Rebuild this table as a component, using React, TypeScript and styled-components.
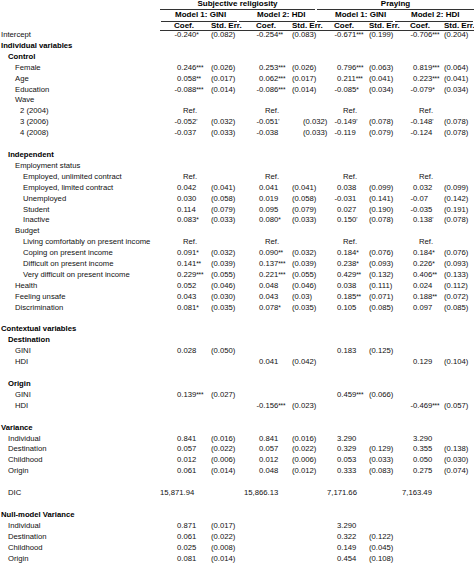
import styled, { createGlobalStyle } from 'styled-components';

const GlobalStyle = createGlobalStyle`
  * { box-sizing: border-box; }
  html, body { margin: 0; padding: 0; background: #fff; }
  body {
    font-family: "Liberation Sans", Arial, sans-serif;
    color: #111;
    overflow: hidden;
  }
`;

// label | coef/std for 4 models
const COLS = '160px 51px 27px 54px 24px 53px 25px 50px 30px';
const COEF_PAD = [17, 21, 21, 19];
const DIC_PAD = [0, 6, 11, 8];

const Table = styled.div`
  width: 474px;
  margin-top: -2px;
  font-size: 7.7px;
`;

const Row = styled.div<{ $h?: number }>`
  display: grid;
  grid-template-columns: ${COLS};
  height: ${(p) => p.$h ?? 10.92}px;
  line-height: ${(p) => p.$h ?? 10.92}px;
  white-space: nowrap;
`;

const Spanner = styled.div<{ $from: number; $left?: boolean }>`
  grid-column: ${(p) => p.$from} / span 4;
  text-align: center;
  font-weight: bold;
  font-size: 8px;
  color: #000;
  border-bottom: 1px solid #333;
  margin: ${(p) => (p.$left ? '0 0 0 1px' : '0 1px 0 0')};
`;

const ModelHead = styled.div<{ $pad: number }>`
  grid-column: span 2;
  padding-left: ${(p) => p.$pad}px;
  font-weight: bold;
  font-size: 8px;
  color: #000;
  border-bottom: 1px solid #333;
  margin: 0 1px;
`;

const ColHead = styled.div<{ $pad: number }>`
  padding-left: ${(p) => p.$pad}px;
  font-weight: bold;
  font-size: 8px;
  color: #000;
  border-bottom: 1px solid #333;
`;

const Blank = styled.div``;

const Label = styled.div<{ $in: number; $bold?: boolean }>`
  padding-left: ${(p) => p.$in}px;
  font-weight: ${(p) => (p.$bold ? 'bold' : 'normal')};
  color: ${(p) => (p.$bold ? '#000' : '#111')};
`;

const Coef = styled.div<{ $pad: number; $neg?: boolean }>`
  padding-left: ${(p) => p.$pad}px;
  text-indent: ${(p) => (p.$neg ? '-0.333em' : '0')};
`;

const Mark = styled.span`
  font-size: 0.85em;
  letter-spacing: -0.2px;
`;

const Err = styled.div<{ $pad?: number }>`
  padding-left: ${(p) => p.$pad ?? 0}px;
`;

type Pair = [string, string?] | null;
type Line =
  | { k: 'blank' }
  | { k: 'head'; label: string; in: number }
  | { k: 'sub'; label: string; in: number }
  | { k: 'data'; label: string; in: number; v: Pair[]; shift?: boolean }
  | { k: 'dic'; label: string; in: number; v: string[] };

const REF: Pair[] = [['Ref.'], ['Ref.'], ['Ref.'], ['Ref.']];

const lines: Line[] = [
  { k: 'data', label: 'Intercept', in: 1, v: [['-0.240*', '(0.082)'], ['-0.254**', '(0.083)'], ['-0.671***', '(0.199)'], ['-0.706***', '(0.204)']] },
  { k: 'head', label: 'Individual variables', in: 1 },
  { k: 'head', label: 'Control', in: 8 },
  { k: 'data', label: 'Female', in: 15, v: [['0.246***', '(0.026)'], ['0.253***', '(0.026)'], ['0.796***', '(0.063)'], ['0.819***', '(0.064)']] },
  { k: 'data', label: 'Age', in: 15, v: [['0.058**', '(0.017)'], ['0.062***', '(0.017)'], ['0.211***', '(0.041)'], ['0.223***', '(0.041)']] },
  { k: 'data', label: 'Education', in: 15, v: [['-0.088***', '(0.014)'], ['-0.086***', '(0.014)'], ['-0.085*', '(0.034)'], ['-0.079*', '(0.034)']] },
  { k: 'sub', label: 'Wave', in: 15 },
  { k: 'data', label: '2 (2004)', in: 20, v: REF },
  { k: 'data', label: '3 (2006)', in: 20, shift: true, v: [["-0.052'", '(0.032)'], ["-0.051'", '(0.032)'], ["-0.149'", '(0.078)'], ["-0.148'", '(0.078)']] },
  { k: 'data', label: '4 (2008)', in: 20, shift: true, v: [['-0.037', '(0.033)'], ['-0.038', '(0.033)'], ['-0.119', '(0.079)'], ['-0.124', '(0.078)']] },
  { k: 'blank' },
  { k: 'head', label: 'Independent', in: 8 },
  { k: 'sub', label: 'Employment status', in: 15 },
  { k: 'data', label: 'Employed, unlimited contract', in: 23, v: REF },
  { k: 'data', label: 'Employed, limited contract', in: 23, v: [['0.042', '(0.041)'], ['0.041', '(0.041)'], ['0.038', '(0.099)'], ['0.032', '(0.099)']] },
  { k: 'data', label: 'Unemployed', in: 23, v: [['0.030', '(0.058)'], ['0.019', '(0.058)'], ['-0.031', '(0.141)'], ['-0.07', '(0.142)']] },
  { k: 'data', label: 'Student', in: 23, v: [['0.114', '(0.079)'], ['0.095', '(0.079)'], ['0.027', '(0.190)'], ['-0.035', '(0.191)']] },
  { k: 'data', label: 'Inactive', in: 23, v: [['0.083*', '(0.033)'], ['0.080*', '(0.033)'], ["0.150'", '(0.078)'], ["0.138'", '(0.078)']] },
  { k: 'sub', label: 'Budget', in: 15 },
  { k: 'data', label: 'Living comfortably on present income', in: 23, v: REF },
  { k: 'data', label: 'Coping on present income', in: 23, v: [['0.091*', '(0.032)'], ['0.090**', '(0.032)'], ['0.184*', '(0.076)'], ['0.184*', '(0.076)']] },
  { k: 'data', label: 'Difficult on present income', in: 23, v: [['0.141**', '(0.039)'], ['0.137***', '(0.039)'], ['0.238*', '(0.093)'], ['0.226*', '(0.093)']] },
  { k: 'data', label: 'Very difficult on present income', in: 23, v: [['0.229***', '(0.055)'], ['0.221***', '(0.055)'], ['0.429**', '(0.132)'], ['0.406**', '(0.133)']] },
  { k: 'data', label: 'Health', in: 15, v: [['0.052', '(0.046)'], ['0.048', '(0.046)'], ['0.038', '(0.111)'], ['0.024', '(0.112)']] },
  { k: 'data', label: 'Feeling unsafe', in: 15, v: [['0.043', '(0.030)'], ['0.043', '(0.03)'], ['0.185**', '(0.071)'], ['0.188**', '(0.072)']] },
  { k: 'data', label: 'Discrimination', in: 15, v: [['0.081*', '(0.035)'], ['0.078*', '(0.035)'], ['0.105', '(0.085)'], ['0.097', '(0.085)']] },
  { k: 'blank' },
  { k: 'head', label: 'Contextual variables', in: 1 },
  { k: 'head', label: 'Destination', in: 8 },
  { k: 'data', label: 'GINI', in: 15, v: [['0.028', '(0.050)'], null, ['0.183', '(0.125)'], null] },
  { k: 'data', label: 'HDI', in: 15, v: [null, ['0.041', '(0.042)'], null, ['0.129', '(0.104)']] },
  { k: 'blank' },
  { k: 'head', label: 'Origin', in: 8 },
  { k: 'data', label: 'GINI', in: 15, v: [['0.139***', '(0.027)'], null, ['0.459***', '(0.066)'], null] },
  { k: 'data', label: 'HDI', in: 15, v: [null, ['-0.156***', '(0.023)'], null, ['-0.469***', '(0.057)']] },
  { k: 'blank' },
  { k: 'head', label: 'Variance', in: 1 },
  { k: 'data', label: 'Individual', in: 8, v: [['0.841', '(0.016)'], ['0.841', '(0.016)'], ['3.290'], ['3.290']] },
  { k: 'data', label: 'Destination', in: 8, v: [['0.057', '(0.022)'], ['0.057', '(0.022)'], ['0.329', '(0.129)'], ['0.355', '(0.138)']] },
  { k: 'data', label: 'Childhood', in: 8, v: [['0.012', '(0.006)'], ['0.012', '(0.006)'], ['0.053', '(0.033)'], ['0.050', '(0.030)']] },
  { k: 'data', label: 'Origin', in: 8, v: [['0.061', '(0.014)'], ['0.048', '(0.012)'], ['0.333', '(0.083)'], ['0.275', '(0.074)']] },
  { k: 'blank' },
  { k: 'dic', label: 'DIC', in: 8, v: ['15,871.94', '15,866.13', '7,171.66', '7,163.49'] },
  { k: 'blank' },
  { k: 'head', label: 'Null-model Variance', in: 1 },
  { k: 'data', label: 'Individual', in: 8, v: [['0.871', '(0.017)'], null, ['3.290'], null] },
  { k: 'data', label: 'Destination', in: 8, v: [['0.061', '(0.022)'], null, ['0.322', '(0.122)'], null] },
  { k: 'data', label: 'Childhood', in: 8, v: [['0.025', '(0.008)'], null, ['0.149', '(0.045)'], null] },
  { k: 'data', label: 'Origin', in: 8, v: [['0.081', '(0.014)'], null, ['0.454', '(0.108)'], null] },
];

const MODELS = ['Model 1: GINI', 'Model 2: HDI', 'Model 1: GINI', 'Model 2: HDI'];

// split "0.246***" into number and significance marks
function Value({ text }: { text: string }) {
  const m = text.match(/^(.*?)([*']*)$/);
  const num = m ? m[1] : text;
  const marks = m ? m[2] : '';
  return (
    <>
      {num}
      {marks && <Mark>{marks}</Mark>}
    </>
  );
}

function Cells({ v, shift }: { v: Pair[]; shift?: boolean }) {
  return (
    <>
      {v.map((p, i) => {
        const coef = p ? p[0] : '';
        const isRef = coef === 'Ref.';
        return [
          <Coef key={'c' + i} $pad={COEF_PAD[i] + (isRef ? 6 : 0)} $neg={coef.startsWith('-')}>
            <Value text={coef} />
          </Coef>,
          <Err key={'e' + i} $pad={shift && i === 1 ? 11 : 0}>
            {p && p[1] ? p[1] : ''}
          </Err>,
        ];
      })}
    </>
  );
}

function TableRow({ line }: { line: Line }) {
  if (line.k === 'blank') return <Row />;
  if (line.k === 'head' || line.k === 'sub')
    return (
      <Row>
        <Label $in={line.in} $bold={line.k === 'head'}>{line.label}</Label>
      </Row>
    );
  if (line.k === 'dic')
    return (
      <Row>
        <Label $in={line.in}>{line.label}</Label>
        {line.v.map((d, i) => [
          <Coef key={'c' + i} $pad={DIC_PAD[i]}>{d}</Coef>,
          <Err key={'e' + i} />,
        ])}
      </Row>
    );
  return (
    <Row>
      <Label $in={line.in}>{line.label}</Label>
      <Cells v={line.v} shift={line.shift} />
    </Row>
  );
}

export default function App() {
  return (
    <>
      <GlobalStyle />
      <Table>
        <Row $h={11}>
          <Blank />
          <Spanner $from={2}>Subjective religiosity</Spanner>
          <Spanner $from={6} $left>Praying</Spanner>
        </Row>
        <Row $h={12}>
          <Blank />
          {MODELS.map((m, i) => (
            <ModelHead key={i} $pad={COEF_PAD[i] - 3}>{m}</ModelHead>
          ))}
        </Row>
        <Row $h={9}>
          <Blank />
          {MODELS.map((_, i) => [
            <ColHead key={'c' + i} $pad={COEF_PAD[i] - 3}>Coef.</ColHead>,
            <ColHead key={'s' + i} $pad={0}>Std. Err.</ColHead>,
          ])}
        </Row>
        {lines.map((l, i) => (
          <TableRow key={i} line={l} />
        ))}
      </Table>
    </>
  );
}
